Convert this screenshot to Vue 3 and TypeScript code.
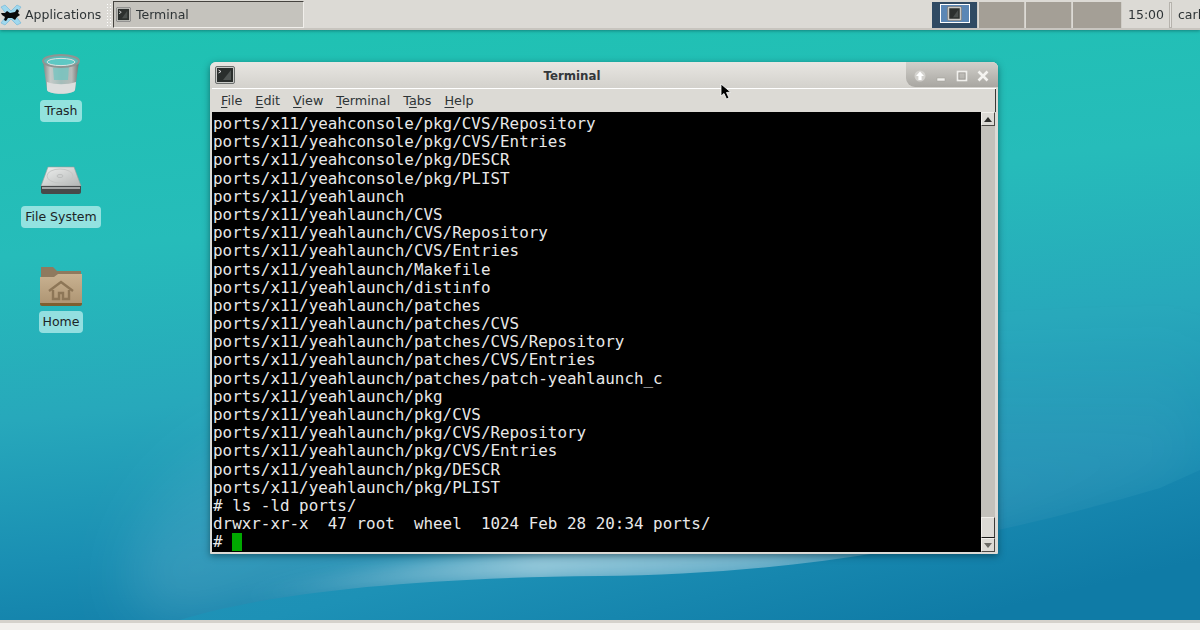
<script setup lang="ts">
const p = 'ports/x11/'
const lines: string[] = [
  p + 'yeahconsole/pkg/CVS/Repository',
  p + 'yeahconsole/pkg/CVS/Entries',
  p + 'yeahconsole/pkg/DESCR',
  p + 'yeahconsole/pkg/PLIST',
  p + 'yeahlaunch',
  p + 'yeahlaunch/CVS',
  p + 'yeahlaunch/CVS/Repository',
  p + 'yeahlaunch/CVS/Entries',
  p + 'yeahlaunch/Makefile',
  p + 'yeahlaunch/distinfo',
  p + 'yeahlaunch/patches',
  p + 'yeahlaunch/patches/CVS',
  p + 'yeahlaunch/patches/CVS/Repository',
  p + 'yeahlaunch/patches/CVS/Entries',
  p + 'yeahlaunch/patches/patch-yeahlaunch_c',
  p + 'yeahlaunch/pkg',
  p + 'yeahlaunch/pkg/CVS',
  p + 'yeahlaunch/pkg/CVS/Repository',
  p + 'yeahlaunch/pkg/CVS/Entries',
  p + 'yeahlaunch/pkg/DESCR',
  p + 'yeahlaunch/pkg/PLIST',
  '# ls -ld ports/',
  'drwxr-xr-x  47 root  wheel  1024 Feb 28 20:34 ports/',
]
const menus = [
  { pre: '', key: 'F', post: 'ile' },
  { pre: '', key: 'E', post: 'dit' },
  { pre: '', key: 'V', post: 'iew' },
  { pre: '', key: 'T', post: 'erminal' },
  { pre: 'T', key: 'a', post: 'bs' },
  { pre: '', key: 'H', post: 'elp' },
]
</script>

<template>
  <div class="desktop">
    <svg class="wallpaper" width="1200" height="590" viewBox="0 30 1200 590" aria-hidden="true">
      <defs>
        <linearGradient id="bg" x1="0.1" y1="0" x2="0.3" y2="1">
          <stop offset="0" stop-color="#1fc2b2" />
          <stop offset="0.35" stop-color="#26bcba" />
          <stop offset="0.62" stop-color="#27a8bb" />
          <stop offset="0.85" stop-color="#1a8fb3" />
          <stop offset="1" stop-color="#127fa9" />
        </linearGradient>
        <linearGradient id="glow" x1="0" y1="0" x2="0" y2="1">
          <stop offset="0" stop-color="#fff" stop-opacity="0" />
          <stop offset="0.6" stop-color="#fff" stop-opacity="0.08" />
          <stop offset="1" stop-color="#fff" stop-opacity="0.16" />
        </linearGradient>
        <linearGradient id="band" x1="0" y1="0" x2="1" y2="0">
          <stop offset="0" stop-color="#fff" stop-opacity="0" />
          <stop offset="0.4" stop-color="#fff" stop-opacity="0.5" />
          <stop offset="0.7" stop-color="#fff" stop-opacity="0.35" />
          <stop offset="1" stop-color="#fff" stop-opacity="0" />
        </linearGradient>
        <linearGradient id="lower" x1="0" y1="0" x2="1" y2="0.6">
          <stop offset="0" stop-color="#2496b9" />
          <stop offset="0.5" stop-color="#1d91b6" />
          <stop offset="1" stop-color="#0f7ba6" />
        </linearGradient>
        <filter id="soft" x="-20%" y="-50%" width="140%" height="200%"><feGaussianBlur stdDeviation="9" /></filter>
        <filter id="softer" x="-30%" y="-30%" width="160%" height="160%"><feGaussianBlur stdDeviation="28" /></filter>
      </defs>
      <rect x="0" y="30" width="1200" height="590" fill="url(#bg)" />
      <path d="M130,600 C130,520 170,460 250,420 L1200,320 L1200,470 L1160,488 C950,550 780,574 600,576 C400,578 260,595 180,620 Z" fill="url(#glow)" filter="url(#softer)" />
      <path d="M230,600 C340,570 480,548 640,540 C760,534 880,520 998,495 L998,545 C900,570 760,582 600,582 C480,583 330,590 230,600 Z" fill="url(#band)" filter="url(#soft)" />
      <path d="M180,620 C260,595 400,578 600,576 C780,574 950,550 1160,488 L1200,470 L1200,620 Z" fill="url(#lower)" />
    </svg>

    <header class="panel">
      <div class="apps">
        <svg width="22" height="24" viewBox="0 0 22 24">
          <path d="M1 4 L5 2 L11 8 L17 2 L21 4 L15 12 L21 20 L17 22 L11 16 L5 22 L1 20 L7 12 Z" fill="#9fd8ee" stroke="#6db4d6" stroke-width="0.6" />
          <path d="M1 10 L5 10 L7 8 L10 10 L15 9 L17 6 L19 8 L18 10 L20 12 L17 14 L15 17 L12 15 L8 15 L6 18 L4 17 L5 14 L2 12 Z" fill="#0a0a0a" />
        </svg>
        <span>Applications</span>
      </div>
      <div class="handle"></div>
      <div class="task">
        <svg class="term-icon" width="15" height="15" viewBox="0 0 20 20">
          <rect x="0.5" y="0.5" width="19" height="19" rx="2" fill="#c8c8c4" stroke="#777" />
          <rect x="2.5" y="2.5" width="15" height="15" fill="#2c302e" />
          <path d="M4 5 L7 7 L4 9" stroke="#eee" fill="none" />
          <path d="M8 15 L15 5 L15 15 Z" fill="#4a4f4d" />
        </svg>
        <span>Terminal</span>
      </div>
      <div class="spacer"></div>
      <div class="pager">
        <div class="ws active">
          <div class="mini">
            <svg width="15" height="15" viewBox="0 0 20 20">
              <rect x="0.5" y="0.5" width="19" height="19" rx="2" fill="#c8c8c4" stroke="#777" />
              <rect x="3" y="3" width="14" height="14" fill="#2c302e" />
              <path d="M8 15 L15 5 L15 15 Z" fill="#4a4f4d" />
            </svg>
          </div>
        </div>
        <div class="ws"></div>
        <div class="ws"></div>
        <div class="ws wide"></div>
      </div>
      <div class="clock">15:00</div>
      <div class="sep"></div>
      <div class="user">carl</div>
    </header>

    <main class="work">
      <nav class="icons">
        <div class="dicon">
          <div class="dglyph">
            <svg width="40" height="42" viewBox="0 0 40 42">
              <defs>
                <linearGradient id="can" x1="0" y1="0" x2="1" y2="0">
                  <stop offset="0" stop-color="#7f8482" />
                  <stop offset="0.2" stop-color="#c6cac8" />
                  <stop offset="0.5" stop-color="#a3bdba" />
                  <stop offset="0.8" stop-color="#b8bbb9" />
                  <stop offset="1" stop-color="#6d7270" />
                </linearGradient>
              </defs>
              <path d="M2 7 L6 36 C8 41 32 41 34 36 L38 7 Z" fill="url(#can)" />
              <path d="M12 14 L28 12 L27 26 L13 26 Z" fill="#6fc4c0" opacity="0.7" />
              <path d="M6 28 C14 31 26 31 35 28 L34 36 C32 41 8 41 6 36 Z" fill="#dcdedd" />
              <ellipse cx="20" cy="7" rx="18" ry="6" fill="#5fb9b6" stroke="#8f9492" stroke-width="2" />
              <ellipse cx="20" cy="8" rx="14" ry="3.6" fill="#5ec8c4" stroke="#dfe3e1" stroke-width="1" />
            </svg>
          </div>
          <div class="dlabel">Trash</div>
        </div>
        <div class="dicon">
          <div class="dglyph">
            <svg width="42" height="30" viewBox="0 0 42 30">
              <defs>
                <linearGradient id="hd" x1="0" y1="0" x2="1" y2="1">
                  <stop offset="0" stop-color="#f0f1f0" />
                  <stop offset="1" stop-color="#b2b5b4" />
                </linearGradient>
              </defs>
              <path d="M8 1 L34 1 L41 20 L1 20 Z" fill="url(#hd)" stroke="#9a9c9b" stroke-width="0.6" />
              <ellipse cx="20" cy="10" rx="13" ry="7" fill="none" stroke="#c4c6c5" />
              <ellipse cx="20" cy="10" rx="3" ry="1.6" fill="#cfd1d0" stroke="#a9abaa" stroke-width="0.5" />
              <path d="M1 20 L41 20 L41 26 C41 27 40 28 39 28 L3 28 C2 28 1 27 1 26 Z" fill="#47494a" />
              <rect x="2" y="21" width="38" height="2" fill="#a3a5a5" />
            </svg>
          </div>
          <div class="dlabel">File System</div>
        </div>
        <div class="dicon">
          <div class="dglyph">
            <svg width="42" height="40" viewBox="0 0 42 40">
              <defs>
                <linearGradient id="fold" x1="0" y1="0" x2="0" y2="1">
                  <stop offset="0" stop-color="#c9b291" />
                  <stop offset="1" stop-color="#ad9472" />
                </linearGradient>
              </defs>
              <path d="M1 1 L13 1 L17 5 L41 5 L41 14 L1 14 Z" fill="#8f7a5e" />
              <path d="M0 11 L14 11 L18 8 L42 8 L42 37 C42 38 41 39 40 39 L2 39 C1 39 0 38 0 37 Z" fill="url(#fold)" />
              <path d="M0 37 L42 37 L42 38 C42 39 41 40 40 40 L2 40 C1 40 0 39 0 38 Z" fill="#7d5f30" />
              <path d="M9 25 L21 16 L33 25 M13 24 L13 33 L19 33 L19 27 L23 27 L23 33 L29 33 L29 24" fill="none" stroke="#8d7657" stroke-width="2.4" />
            </svg>
          </div>
          <div class="dlabel">Home</div>
        </div>
      </nav>

      <section class="window">
        <div class="titlebar">
          <svg class="tb-icon" width="20" height="18" viewBox="0 0 20 18">
            <rect x="0.5" y="0.5" width="19" height="17" rx="1.5" fill="#c8c9c6" stroke="#6c6f6d" />
            <rect x="2" y="2" width="16" height="14" fill="#2a2e2c" />
            <path d="M3.5 4 L6 5.5 L3.5 7" stroke="#eee" fill="none" stroke-width="0.9" />
            <path d="M8 14 L16 4 L16 14 Z" fill="#505553" />
          </svg>
          <div class="title">Terminal</div>
          <div class="controls">
            <svg width="14" height="14" viewBox="0 0 14 14">
              <circle cx="7" cy="7" r="5.5" fill="#d9d8d4" opacity="0.8" />
              <path d="M7 2.5 L11 7 L8.6 7 L8.6 11 L5.4 11 L5.4 7 L3 7 Z" fill="#fff" />
            </svg>
            <svg width="14" height="14" viewBox="0 0 14 14">
              <rect x="3" y="9" width="8" height="3" fill="#f1f0ed" stroke="#a09e99" stroke-width="0.5" />
            </svg>
            <svg width="14" height="14" viewBox="0 0 14 14">
              <rect x="2.5" y="2.5" width="9" height="9" fill="none" stroke="#f1f0ed" stroke-width="1.6" />
              <rect x="4" y="4" width="6" height="6" fill="none" stroke="#8f8d88" stroke-width="0.5" />
            </svg>
            <svg width="14" height="14" viewBox="0 0 14 14">
              <path d="M2.5 2.5 L11.5 11.5 M11.5 2.5 L2.5 11.5" stroke="#f4f3f0" stroke-width="2.6" />
            </svg>
          </div>
        </div>
        <div class="body">
          <div class="menubar">
            <span v-for="m in menus" :key="m.key + m.post" class="menu">{{ m.pre }}<u>{{ m.key }}</u>{{ m.post }}</span>
          </div>
          <div class="content">
            <div class="terminal">
              <div v-for="(l, i) in lines" :key="i" class="line">{{ l }}</div>
              <div class="line"># <span class="cursor"></span></div>
            </div>
            <div class="scrollbar">
              <div class="sbtn"><i class="up"></i></div>
              <div class="trough"></div>
              <div class="thumb"></div>
              <div class="sbtn"><i class="down"></i></div>
            </div>
          </div>
        </div>
      </section>

      <svg class="pointer" width="12" height="18" viewBox="0 0 12 18">
        <path d="M1 1 L1 13 L4 10.5 L6.5 16 L9 15 L6.5 9.5 L10.5 9 Z" fill="#000" stroke="#fff" stroke-width="0.8" />
      </svg>
    </main>

    <footer class="strip"></footer>
  </div>
</template>

<style scoped>
.desktop {
  position: relative;
  width: 1200px;
  height: 630px;
  overflow: hidden;
  display: flex;
  flex-direction: column;
  font-family: "DejaVu Sans", sans-serif;
  font-size: 12.5px;
  color: #2e3436;
  filter: blur(0.35px);
}
.wallpaper {
  position: absolute;
  left: 0;
  top: 30px;
}
.panel {
  position: relative;
  z-index: 2;
  height: 30px;
  box-sizing: border-box;
  display: flex;
  align-items: stretch;
  background: #dcdad5;
  border-bottom: 2px solid #c8c5bf;
  box-shadow: 0 1px 3px rgba(0, 60, 60, 0.45);
}
.apps {
  display: flex;
  align-items: center;
  gap: 3px;
  padding-top: 1px;
  box-sizing: border-box;
  width: 105px;
  flex: none;
}
.handle {
  width: 5px;
  margin: 3px 2px 1px 1px;
  background-image: radial-gradient(#fff 0.8px, transparent 1px);
  background-size: 3px 3px;
  flex: none;
}
.task {
  width: 191px;
  box-sizing: border-box;
  flex: none;
  margin-top: 1px;
  display: flex;
  align-items: center;
  gap: 5px;
  padding: 0 0 0 2px;
  background: #c5c3bd;
  border: 1px solid #f1efeb;
  border-top: 1px solid #45433f;
  border-left: 1px solid #45433f;
}
.term-icon {
  flex: none;
}
.spacer {
  flex: 1;
}
.pager {
  display: flex;
  gap: 1px;
  margin-top: 2px;
  height: 26px;
  flex: none;
}
.ws {
  width: 45px;
  background: #a49f96;
  border-right: 1px solid #d0cdc7;
}
.ws.wide {
  width: 48px;
}
.ws.active {
  background: #2f4a63;
  display: flex;
  justify-content: center;
  padding-top: 2px;
  box-sizing: border-box;
  width: 46px;
}
.mini {
  width: 30px;
  height: 19px;
  box-sizing: border-box;
  background: #5b87b5;
  border: 1px solid #fff;
  display: flex;
  justify-content: center;
  align-items: center;
}
.clock {
  width: 46px;
  flex: none;
  text-align: center;
  line-height: 29px;
  margin-left: 1px;
}
.sep {
  width: 3px;
  margin: 2px 0 0;
  background: #e4e2de;
  border: 1px solid #b6b3ad;
  box-sizing: border-box;
  flex: none;
}
.user {
  width: 28px;
  padding-left: 6px;
  box-sizing: border-box;
  line-height: 29px;
  overflow: hidden;
  white-space: nowrap;
  flex: none;
}
.work {
  position: relative;
  z-index: 1;
  flex: 1;
  min-height: 0;
}
.icons {
  width: 122px;
  display: flex;
  flex-direction: column;
}
.dicon {
  height: 105.5px;
  display: flex;
  flex-direction: column;
  align-items: center;
}
.dglyph {
  height: 70px;
  flex: none;
  display: flex;
  align-items: flex-end;
  padding-bottom: 4px;
  box-sizing: border-box;
}
.dicon:nth-child(2) .dglyph {
  padding-bottom: 10px;
}
.dicon:nth-child(3) .dglyph {
  padding-bottom: 5px;
}
.dlabel {
  height: 22px;
  line-height: 22px;
  padding: 0 4px;
  border-radius: 4px;
  background: rgba(190, 240, 238, 0.72);
  color: #1c2426;
  font-size: 12.5px;
  white-space: nowrap;
}
.window {
  position: absolute;
  left: 210px;
  top: 32px;
  width: 788px;
  height: 492px;
  box-sizing: border-box;
  border-radius: 6px 6px 1px 1px;
  background: #dcdad5;
  box-shadow: 0 2px 7px rgba(0, 30, 40, 0.5);
  display: flex;
  flex-direction: column;
  overflow: hidden;
}
.titlebar {
  height: 26px;
  flex: none;
  display: flex;
  align-items: center;
  position: relative;
  background: linear-gradient(#e8e6e2, #d3d1cc);
  padding-left: 5px;
}
.tb-icon {
  flex: none;
}
.title {
  flex: 1;
  text-align: center;
  font-weight: 700;
  font-size: 11.8px;
  color: #33373a;
  padding: 2px 92px 0 3px;
  box-sizing: border-box;
}
.controls {
  position: absolute;
  right: 0;
  top: 0;
  width: 92px;
  height: 25px;
  box-sizing: border-box;
  padding: 7px 8px 0 7px;
  display: flex;
  justify-content: space-between;
  align-items: flex-start;
  background: linear-gradient(#d2d0cb, #a8a6a1);
  border-bottom-left-radius: 9px;
}
.body {
  flex: 1;
  min-height: 0;
  display: flex;
  flex-direction: column;
  margin: 0 2px 2px 2px;
  border-top: 1px solid #fff;
}
.menubar {
  height: 23px;
  flex: none;
  display: flex;
  align-items: center;
  gap: 13px;
  padding-left: 9px;
  background: #dcdad5;
  border-right: 1px solid #3a3936;
  font-size: 12.75px;
}
.menu u {
  text-underline-offset: 2px;
  text-decoration-thickness: 1px;
}
.content {
  flex: 1;
  min-height: 0;
  display: flex;
}
.terminal {
  flex: 1;
  background: #000;
  color: #e8e8e8;
  font-family: "DejaVu Sans Mono", monospace;
  font-size: 15.9px;
  line-height: 18.2px;
  padding: 3px 0 0 1px;
  white-space: pre;
  overflow: hidden;
}
.line {
  height: 18.2px;
}
.cursor {
  display: inline-block;
  width: 10px;
  height: 18px;
  background: #00a800;
  vertical-align: top;
  margin-top: 0;
}
.scrollbar {
  width: 14px;
  flex: none;
  display: flex;
  flex-direction: column;
  background: #c3c1bb;
  border-right: 1px solid #dcdad5;
  box-sizing: content-box;
}
.sbtn {
  height: 14px;
  flex: none;
  display: flex;
  align-items: center;
  justify-content: center;
  background: #dcdad5;
  border: 1px solid #f1efeb;
  border-right-color: #4a4945;
  border-bottom-color: #4a4945;
  box-sizing: border-box;
}
.sbtn i {
  width: 0;
  height: 0;
  border-left: 4px solid transparent;
  border-right: 4px solid transparent;
}
.up {
  border-bottom: 5px solid #2e2e2c;
}
.down {
  border-top: 5px solid #6b6a66;
}
.trough {
  flex: 1;
}
.thumb {
  height: 21px;
  flex: none;
  background: #dcdad5;
  border: 1px solid #f1efeb;
  border-right-color: #3c3b38;
  border-bottom-color: #1c1b1a;
  box-sizing: border-box;
}
.pointer {
  position: absolute;
  left: 720px;
  top: 53px;
}
.strip {
  position: relative;
  z-index: 1;
  height: 10px;
  flex: none;
  box-sizing: border-box;
  background: #f3f1ee;
  border-top: 3px solid #d5d2cc;
}
</style>
<style>
html, body { margin: 0; padding: 0; background: #1a8fb3; }
</style>
